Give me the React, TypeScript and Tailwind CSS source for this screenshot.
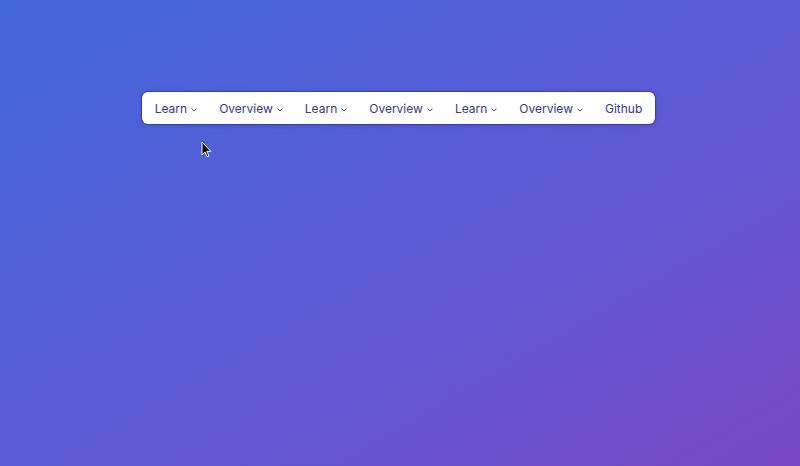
const items = [
  { label: 'Learn', menu: true },
  { label: 'Overview', menu: true },
  { label: 'Learn', menu: true },
  { label: 'Overview', menu: true },
  { label: 'Learn', menu: true },
  { label: 'Overview', menu: true },
  { label: 'Github', menu: false },
];

function Caret() {
  return (
    <svg width="6" height="4" viewBox="0 0 6 4" fill="none" className="ml-1 mt-[3px]">
      <path d="M0.8 0.9 L3 3 L5.2 0.9" stroke="currentColor" strokeWidth="0.9" strokeLinecap="round" strokeLinejoin="round" />
    </svg>
  );
}

function Pointer() {
  return (
    <svg width="11" height="17" viewBox="0 0 11 17" className="absolute left-[201px] top-[141px]">
      <path
        d="M1 1 L1 14 L4 11 L6.2 15.8 L8 15 L5.8 10.3 L9.8 10.3 Z"
        fill="#000"
        stroke="#fff"
        strokeWidth="1"
        strokeLinejoin="round"
      />
    </svg>
  );
}

export default function App() {
  return (
    <div className="relative w-full h-[466px] overflow-hidden bg-[linear-gradient(330deg,#7848c6_0%,#5a5bd5_50%,#4367db_100%)] font-['Inter','Liberation_Sans',sans-serif]">
      <div className="flex justify-center pt-[92px] pr-[3px]">
        <nav className="flex items-center p-[2px] bg-white rounded-md shadow-[0_0_1px_1px_rgba(30,25,120,0.45),0_2px_10px_rgba(0,0,0,0.08)]">
          {items.map((item, i) => (
            <button
              key={i}
              className="flex items-center h-7 px-[11px] pt-px text-[12px] font-normal leading-none text-[#3a3585]"
            >
              <span>{item.label}</span>
              {item.menu && <Caret />}
            </button>
          ))}
        </nav>
      </div>
      <Pointer />
    </div>
  );
}
